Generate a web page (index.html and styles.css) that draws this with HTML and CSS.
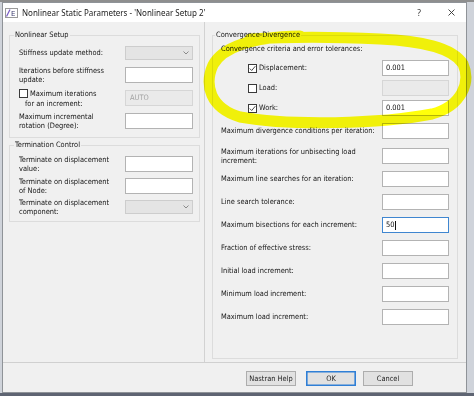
FILE: index.html
```html
<!DOCTYPE html>
<html lang="en">
<head>
  <meta charset="UTF-8">
  <title>Nonlinear Static Parameters</title>
  <link rel="stylesheet" href="styles.css">
</head>
<body>

<div class="desk">
  <div class="window">
    <div class="titlebar">
      <svg class="app-icon" width="13" height="10" viewBox="0 0 13 10">
        <rect x="0.5" y="0.5" width="12" height="9" fill="#fff" stroke="#9a9a9a"/>
        <path d="M1.5 8.5 L5 1.5" stroke="#7a5cc4" stroke-width="1.3"/>
        <text x="6" y="8" font-size="7" font-family="DejaVu Sans" fill="#3b3b6e">E</text>
      </svg>
      <span class="title">Nonlinear Static Parameters - 'Nonlinear Setup 2'</span>
      <span class="tb-btn help">?</span>
      <span class="tb-btn close">
        <svg width="7" height="7" viewBox="0 0 7 7"><path d="M0.5 0.5 L6.5 6.5 M6.5 0.5 L0.5 6.5" stroke="#333" stroke-width="0.9"/></svg>
      </span>
    </div>

    <div class="main">
      <div class="pane pane-left">
        <fieldset class="group">
          <legend>Nonlinear Setup</legend>
          <div class="row row-select">
            <span class="label">Stiffness update method:</span>
            <span class="field select disabled">
              <svg width="6" height="4" viewBox="0 0 6 4"><path d="M0.5 0.5 L3 3 L5.5 0.5" fill="none" stroke="#8a8a8a"/></svg>
            </span>
          </div>
          <div class="row">
            <span class="label">Iterations before stiffness<br>update:</span>
            <span class="field"></span>
          </div>
          <div class="row">
            <span class="label check-label">
              <span class="checkbox"></span>
              <span class="check-text"><span class="first">Maximum iterations</span><br>for an increment:</span>
            </span>
            <span class="field disabled">AUTO</span>
          </div>
          <div class="row">
            <span class="label">Maximum incremental<br>rotation (Degree):</span>
            <span class="field"></span>
          </div>
        </fieldset>

        <fieldset class="group group-term">
          <legend>Termination Control</legend>
          <div class="row">
            <span class="label">Terminate on displacement<br>value:</span>
            <span class="field"></span>
          </div>
          <div class="row">
            <span class="label">Terminate on displacement<br>of Node:</span>
            <span class="field"></span>
          </div>
          <div class="row row-select">
            <span class="label">Terminate on displacement<br>component:</span>
            <span class="field select disabled">
              <svg width="6" height="4" viewBox="0 0 6 4"><path d="M0.5 0.5 L3 3 L5.5 0.5" fill="none" stroke="#8a8a8a"/></svg>
            </span>
          </div>
        </fieldset>
      </div>

      <div class="pane pane-right">
        <fieldset class="group group-conv">
          <legend>Convergence-Divergence</legend>
          <div class="caption">Convergence criteria and error tolerances:</div>
          <div class="row row-first">
            <span class="label check-row">
              <span class="checkbox checked"><svg width="7" height="7" viewBox="0 0 7 7"><path d="M0.8 3.6 L2.7 5.5 L6.3 1.2" fill="none" stroke="#333" stroke-width="0.9"/></svg></span>Displacement:
            </span>
            <span class="field">0.001</span>
          </div>
          <div class="row row-tight">
            <span class="label check-row"><span class="checkbox"></span>Load:</span>
            <span class="field disabled"></span>
          </div>
          <div class="row row-tight">
            <span class="label check-row">
              <span class="checkbox checked"><svg width="7" height="7" viewBox="0 0 7 7"><path d="M0.8 3.6 L2.7 5.5 L6.3 1.2" fill="none" stroke="#333" stroke-width="0.9"/></svg></span>Work:
            </span>
            <span class="field">0.001</span>
          </div>
          <div class="row">
            <span class="label">Maximum divergence conditions per iteration:</span>
            <span class="field"></span>
          </div>
          <div class="row row-wide">
            <span class="label">Maximum iterations for unbisecting load<br>increment:</span>
            <span class="field"></span>
          </div>
          <div class="row">
            <span class="label">Maximum line searches for an iteration:</span>
            <span class="field"></span>
          </div>
          <div class="row">
            <span class="label">Line search tolerance:</span>
            <span class="field"></span>
          </div>
          <div class="row">
            <span class="label">Maximum bisections for each increment:</span>
            <span class="field focused">50<span class="caret"></span></span>
          </div>
          <div class="row">
            <span class="label">Fraction of effective stress:</span>
            <span class="field"></span>
          </div>
          <div class="row">
            <span class="label">Initial load increment:</span>
            <span class="field"></span>
          </div>
          <div class="row">
            <span class="label">Minimum load increment:</span>
            <span class="field"></span>
          </div>
          <div class="row">
            <span class="label">Maximum load increment:</span>
            <span class="field"></span>
          </div>
        </fieldset>
      </div>
    </div>

    <div class="footer">
      <span class="button btn-help">Nastran Help</span>
      <span class="button btn-ok">OK</span>
      <span class="button">Cancel</span>
    </div>
  </div>

  <!-- gelber Marker ueber dem Dialog -->
  <svg class="marker" width="474" height="396" viewBox="0 0 474 396">
    <path d="M 300 36 C 250 37, 222 48, 213 65 C 204 85, 210 108, 240 117 C 290 126, 380 124, 432 114 C 462 106, 471 82, 463 64 C 452 47, 420 41, 380 39 C 340 37, 300 36, 250 39"
          fill="none" stroke="#ffff0a" stroke-width="11" stroke-linecap="round"/>
  </svg>
</div>

</body>
</html>
```

FILE: styles.css
```css
* {
  box-sizing: border-box;
}

html, body {
  margin: 0;
}

body {
  width: 474px;
  height: 396px;
  overflow: hidden;
  background: linear-gradient(to bottom, #8e8e8e 0 2px, #cfd3da 2px calc(100% - 3px), #5e6472 calc(100% - 3px));
  font-family: "DejaVu Sans Condensed", "DejaVu Sans", sans-serif;
  font-size: 7.4px;
  color: #141414;
}

/* Desktop mit Dialogfenster */
.desk {
  position: relative;
  width: 474px;
  height: 396px;
  padding: 2px 7px 3px 2px;
}

.window {
  width: 465px;
  height: 391px;
  border: 1px solid #8f9398;
  background-color: #f0f0f0;
  display: flex;
  flex-direction: column;
}

/* Titelleiste */
.titlebar {
  height: 19px;
  background-color: #fff;
  display: flex;
  align-items: center;
  padding-left: 2px;
}

.app-icon {
  margin-right: 4px;
}

.title {
  font-family: "Noto Sans", "Open Sans", sans-serif;
  font-size: 8px;
  color: #1a1a1a;
}

.tb-btn {
  height: 19px;
  display: flex;
  align-items: center;
  justify-content: center;
  font-family: "Noto Sans", sans-serif;
  color: #333;
}

.help {
  margin-left: auto;
  width: 34px;
  font-size: 8.5px;
}

.close {
  width: 30px;
}

/* Hauptbereich mit zwei Spalten */
.main {
  flex: 1;
  display: flex;
}

.pane {
  display: flex;
  flex-direction: column;
}

.pane-left {
  width: 202px;
  border-right: 1px solid #d2d2d2;
  padding: 8px 4px 0 6px;
}

.pane-right {
  flex: 1;
  padding: 8px 8px 3px 7px;
}

.group {
  margin: 0;
  min-width: 0;
  border: 1px solid #dcdcdc;
  padding: 6px 6px 8px 9px;
}

.group legend {
  padding: 0 1px;
  margin-left: -5px;
  line-height: 10px;
}

.group-term {
  margin-top: 2px;
  padding-bottom: 7px;
}

.group-conv {
  flex: 1;
  padding: 4px 8px 0 8px;
}

.group-conv legend {
  margin-left: -6px;
}

.caption {
  line-height: 10px;
  margin-bottom: 6px;
}

/* Zeilen: Beschriftung links, Feld rechts */
.row {
  height: 16px;
  display: flex;
  align-items: center;
  justify-content: space-between;
}

.row + .row {
  margin-top: 7px;
}

.group-term .row + .row {
  margin-top: 6px;
}

.row-select {
  height: 14px;
}

.group-conv .row + .row.row-tight {
  margin-top: 4px;
}

.group-conv .row + .row.row-wide {
  margin-top: 9px;
}

.label {
  line-height: 9.5px;
  white-space: nowrap;
}

.field {
  width: 68px;
  height: 16px;
  flex: none;
  background-color: #fff;
  border: 1px solid #b3b3b3;
  padding-left: 3px;
  line-height: 14px;
  display: flex;
  align-items: center;
}

.group-conv .field {
  width: 67px;
}

.field.disabled {
  background-color: #eaeaea;
  border-color: #d6d6d6;
  color: #a3a3a3;
  padding-left: 4px;
}

.field.select {
  height: 14px;
  background-color: #e4e4e4;
  border-color: #cdcdcd;
  justify-content: flex-end;
  padding-right: 3px;
}

.field.focused {
  border-color: #3f86d0;
}

.caret {
  display: inline-block;
  width: 1px;
  height: 9px;
  margin-left: 1px;
  background-color: #111;
}

/* Kontrollkaestchen */
.checkbox {
  width: 9px;
  height: 9px;
  flex: none;
  border: 1px solid #3a3a3a;
  background-color: #fff;
  display: flex;
  align-items: center;
  justify-content: center;
}

.check-label {
  display: flex;
  align-items: flex-start;
}

.check-label .checkbox {
  margin-top: 0.5px;
}

.check-text {
  margin-left: -3px;
  margin-top: 1px;
}

.check-text .first {
  padding-left: 5px;
}

.check-row {
  display: flex;
  align-items: center;
  padding-left: 27px;
}

.check-row .checkbox {
  margin-right: 2px;
}

/* Fusszeile mit Knoepfen */
.footer {
  height: 30px;
  border-top: 1px solid #d0d0d0;
  display: flex;
  align-items: center;
  justify-content: flex-end;
  padding: 1px 53px 0 0;
}

.button {
  width: 50px;
  height: 15px;
  display: flex;
  align-items: center;
  justify-content: center;
  background-color: #e1e1e1;
  border: 1px solid #adadad;
  color: #222;
}

.btn-help {
  margin-right: 10px;
}

.btn-ok {
  margin-right: 7px;
  border-color: #2f7fd6;
  box-shadow: inset 0 0 0 0.6px #2f7fd6;
}

.marker {
  position: absolute;
  top: 0;
  left: 0;
  pointer-events: none;
  mix-blend-mode: multiply;
}
```
